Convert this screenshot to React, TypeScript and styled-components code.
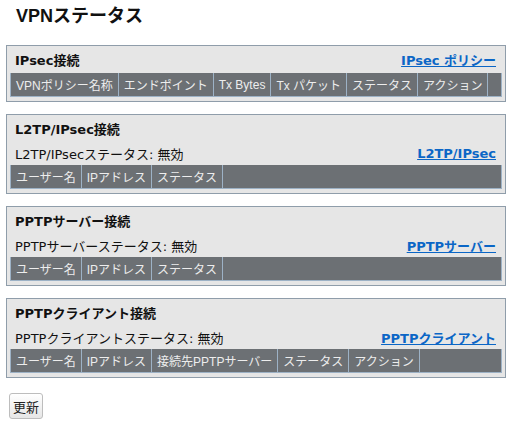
import * as React from 'react';
import styled, { createGlobalStyle } from 'styled-components';

const GlobalStyle = createGlobalStyle`
  body {
    margin: 0;
    background: #ffffff;
    color: #111111;
    font-family: 'DejaVu Sans', 'Noto Sans CJK JP', sans-serif;
    font-size: 13px;
  }
`;

const Page = styled.div`
  width: 500px;
  padding: 0 0 0 6px;
`;

const PageTitle = styled.h1`
  margin: 0;
  padding: 4px 10px 0;
  height: 34px;
  line-height: 24px;
  font-family: 'Liberation Sans', 'Noto Sans CJK JP', sans-serif;
  font-size: 18px;
  font-weight: 700;
  margin-bottom: 7px;
`;

const Section = styled.section`
  background: #e6e6e6;
  border: 1px solid #8f9daa;
  padding: 0 3px 4px;
  margin-bottom: 12px;
`;

const Row = styled.div<{ $height: number }>`
  display: flex;
  align-items: center;
  justify-content: space-between;
  height: ${(p) => p.$height}px;
  padding: 0 6px 0 5px;
`;

const SectionTitle = styled.span`
  font-weight: 700;
`;

const Status = styled.span``;

const Link = styled.a`
  color: #0b66c6;
  font-weight: 700;
  text-decoration: underline;
  cursor: pointer;
`;

const Table = styled.table`
  width: 100%;
  border-collapse: collapse;
`;

const HeadCell = styled.th<{ $fill?: boolean }>`
  height: 23px;
  padding: 0 5px;
  background: #6c7074;
  color: #ededed;
  border: 1px solid #9db2c6;
  border-top: none;
  font-family: 'Liberation Sans', 'Noto Sans CJK JP', sans-serif;
  font-size: 12px;
  font-weight: 400;
  text-align: left;
  white-space: nowrap;
  width: ${(p) => (p.$fill ? 'auto' : '1%')};
`;

const RefreshButton = styled.button`
  margin: 3px 0 0 3px;
  height: 26px;
  padding: 0 3px;
  border: 1px solid #bdbdbd;
  border-radius: 3px;
  background: linear-gradient(#ffffff, #e6e6e6);
  color: #222222;
  font-family: 'Noto Sans CJK JP', sans-serif;
  font-size: 13px;
`;

interface Block {
  title: string;
  status?: string;
  link: string;
  columns: string[];
}

const blocks: Block[] = [
  {
    title: 'IPsec接続',
    link: 'IPsec ポリシー',
    columns: ['VPNポリシー名称', 'エンドポイント', 'Tx Bytes', 'Tx パケット', 'ステータス', 'アクション'],
  },
  {
    title: 'L2TP/IPsec接続',
    status: 'L2TP/IPsecステータス: 無効',
    link: 'L2TP/IPsec',
    columns: ['ユーザー名', 'IPアドレス', 'ステータス'],
  },
  {
    title: 'PPTPサーバー接続',
    status: 'PPTPサーバーステータス: 無効',
    link: 'PPTPサーバー',
    columns: ['ユーザー名', 'IPアドレス', 'ステータス'],
  },
  {
    title: 'PPTPクライアント接続',
    status: 'PPTPクライアントステータス: 無効',
    link: 'PPTPクライアント',
    columns: ['ユーザー名', 'IPアドレス', '接続先PPTPサーバー', 'ステータス', 'アクション'],
  },
];

const App = () => (
  <Page>
    <GlobalStyle />
    <PageTitle>VPNステータス</PageTitle>
    {blocks.map((b) => (
      <Section key={b.title}>
        {b.status ? (
          <>
            <Row $height={26}>
              <SectionTitle>{b.title}</SectionTitle>
            </Row>
            <Row $height={24}>
              <Status>{b.status}</Status>
              <Link>{b.link}</Link>
            </Row>
          </>
        ) : (
          <Row $height={27}>
            <SectionTitle>{b.title}</SectionTitle>
            <Link>{b.link}</Link>
          </Row>
        )}
        <Table>
          <thead>
            <tr>
              {b.columns.map((c) => (
                <HeadCell key={c}>{c}</HeadCell>
              ))}
              <HeadCell $fill />
            </tr>
          </thead>
        </Table>
      </Section>
    ))}
    <RefreshButton>更新</RefreshButton>
  </Page>
);

export default App;
